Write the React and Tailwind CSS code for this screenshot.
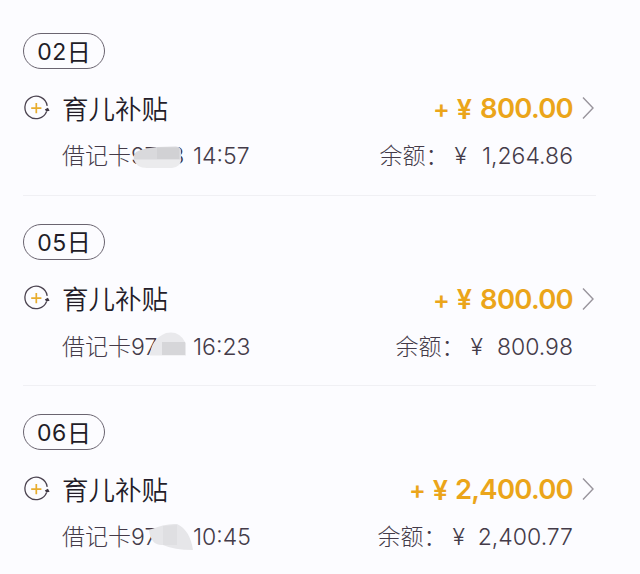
import React from "react";

const entries = [
  {
    day: "02", prefix: "97", suffix: "8", time: "14:57",
    amount: "800.00", balance: "1,264.86",
    balanceWidth: "w-[193.5px]", amountWidth: "w-[139px]", mask: "a",
  },
  {
    day: "05", prefix: "97", suffix: "", time: "16:23",
    amount: "800.00", balance: "800.98",
    balanceWidth: "w-[177.5px]", amountWidth: "w-[139px]", mask: "b",
  },
  {
    day: "06", prefix: "97", suffix: "", time: "10:45",
    amount: "2,400.00", balance: "2,400.77",
    balanceWidth: "w-[195.5px]", amountWidth: "w-[163px]", mask: "c",
  },
];

function IncomeIcon() {
  return (
    <svg className="-mt-px h-[26px] w-[28px] shrink-0" viewBox="0 0 28 26" fill="none">
      <path d="M24.2 10.8A11.2 11.2 0 1 0 23.6 16.4" stroke="#4b4350" strokeWidth="1.3" />
      <path d="M21.8 14.6L24.9 12.8L26.6 15.8L23.4 16.6Z" fill="#3c3541" />
      <path d="M13.3 8V18.2M8.2 13.1H18.4" stroke="#e8ad2e" strokeWidth="1.7" />
    </svg>
  );
}

function Mask({ kind }) {
  return (
    <svg className="absolute left-[70px] top-0 h-[34px] w-[66px]" viewBox="0 0 66 34">
      {kind === "a" && (
        <>
          <path d="M4 13Q10 9.500 25 8L44 7.500Q49 8 49 12V21H2Q1 16 4 13Z" fill="#d9d9dc" />
          <path d="M25 8.500H47V20H25Z" fill="#d1d1d4" />
          <path d="M2 20.500H49Q49 28 40 29H15Q4 29 2 20.500Z" fill="#ebebed" />
        </>
      )}
      {kind === "b" && (
        <>
          <path d="M18 25.500Q19 9 34 3Q47 0 53 12L54 13V25.500Z" fill="#e9e9ec" />
          <path d="M30 12H53V25H30Z" fill="#d6d6d9" />
        </>
      )}
      {kind === "c" && (
        <>
          <path d="M17 10Q34 3 45 4Q58 10 61 30Q42 30 31 25Q19 26 17 10Z" fill="#e6e6e9" />
          <path d="M31 6L45 5V25H31Z" fill="#dfdfe2" />
        </>
      )}
    </svg>
  );
}

function Entry({ item, last }) {
  return (
    <section className={`ml-[23px] flex h-[190.5px] w-[573px] flex-col ${last ? "" : "border-b border-[#f0f0f4]"}`}>
      <div className="mt-[28px] flex h-[36px] w-[82px] shrink-0 items-center justify-center rounded-full border border-[#6a6470] pt-[3px] text-[#221c27]">
        <span className="text-[23px] leading-none tracking-[0.5px]">{item.day}</span>
        <span className="text-[24px] leading-none">日</span>
      </div>

      <div className="mt-[20px] flex h-[38px] shrink-0 items-center">
        <IncomeIcon />
        <h2 className="ml-[11px] pt-[2px] text-[26.5px] leading-none font-[350] text-[#241d29]">育儿补贴</h2>
        <div className={`ml-auto flex shrink-0 items-center pt-[2px] text-[#eba51a] ${item.amountWidth}`}>
          <span className="pt-px text-[25px] leading-none font-semibold">+</span>
          <span className="ml-[7px] text-[27px] leading-none font-semibold">¥</span>
          <span className="-mr-px ml-auto text-[27.5px] leading-none font-semibold tracking-[-0.75px]">{item.amount}</span>
        </div>
        <svg className="ml-[8px] h-[24px] w-[16px] shrink-0" viewBox="0 0 16 24" fill="none">
          <path d="M3 1.5L13 12L3 22.5" stroke="#98949c" strokeWidth="1.4" />
        </svg>
      </div>

      <div className="mt-[12px] flex h-[34px] shrink-0 items-center pr-[23px] pl-[39px] font-light text-[#443b49]">
        <div className="relative flex h-full w-[190px] items-center text-[23px] leading-none">
          <span className="pt-px">借记卡</span>
          <span className="pt-px">{item.prefix}</span>
          <span className="ml-[13px] pt-px">{item.suffix}</span>
          <Mask kind={item.mask} />
          <span className="absolute left-[131px] pt-px">{item.time}</span>
        </div>
        <div className={`ml-auto flex items-center pt-px text-[23px] leading-none ${item.balanceWidth}`}>
          <span>余额：</span>
          <span className="ml-[6px]">¥</span>
          <span className="ml-auto">{item.balance}</span>
        </div>
      </div>
    </section>
  );
}

export default function App() {
  return (
    <main className="h-[574px] w-[640px] overflow-hidden bg-[#fcfcff] pt-[5px] font-['Inter','Noto_Sans_CJK_SC',sans-serif]">
      {entries.map((item, i) => (
        <Entry key={item.day} item={item} last={i === entries.length - 1} />
      ))}
    </main>
  );
}
